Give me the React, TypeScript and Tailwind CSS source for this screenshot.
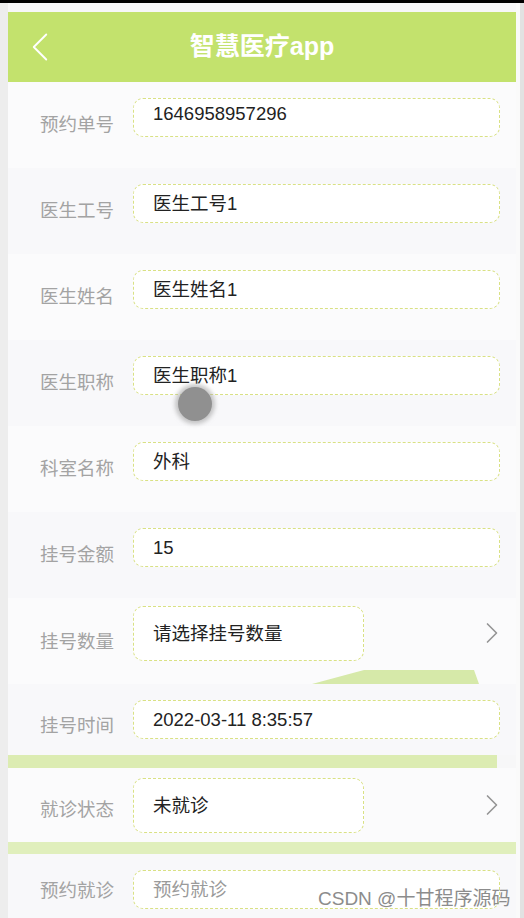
import { ChevronLeft, ChevronRight } from "lucide-react";

const font = { fontFamily: '"Liberation Sans", "Noto Sans CJK SC", sans-serif' };

type Field = {
  label: string;
  value: string;
  select?: boolean;
  top?: boolean;
  placeholder?: boolean;
  h: string;
  boxTop?: string;
  labelPad?: string;
};

const rows: Field[] = [
  { label: "预约单号", value: "1646958957296", top: true, h: "h-[86px]" },
  { label: "医生工号", value: "医生工号1", h: "h-[86px]" },
  { label: "医生姓名", value: "医生姓名1", h: "h-[86px]" },
  { label: "医生职称", value: "医生职称1", h: "h-[86px]" },
  { label: "科室名称", value: "外科", h: "h-[86px]" },
  { label: "挂号金额", value: "15", h: "h-[86px]" },
  { label: "挂号数量", value: "请选择挂号数量", select: true, h: "h-[86px]", boxTop: "pt-[8px]", labelPad: "pt-[2px]" },
  { label: "挂号时间", value: "2022-03-11 8:35:57", h: "h-[71px]", labelPad: "pt-[12px]" },
];

function Row({ f, alt }: { f: Field; alt?: boolean }) {
  return (
    <div className={`relative flex ${f.h} ${alt ? "bg-[#f8f8fa]" : "bg-[#fbfbfc]"}`}>
      <div className={`flex w-[125px] shrink-0 items-center pl-[32px] text-[18.5px] text-[#a3a3a3] ${f.labelPad ?? ""}`}>
        {f.label}
      </div>
      <div className={`${f.boxTop ?? "pt-[16px]"} ${f.select ? "flex flex-1 items-start" : "flex-1 pr-[16px]"}`}>
        <div
          className={`flex rounded-[10px] border border-dashed border-[#d9e184] bg-white pl-[19px] text-[18.5px] ${
            f.select ? "h-[55px] w-[231px] items-center" : f.top ? "h-[39px] items-start pt-[1px]" : "h-[39px] items-center"
          } ${f.placeholder ? "text-[#9a9a9a]" : "text-[#222]"}`}
        >
          {f.value}
        </div>
        {f.select && (
          <div className="ml-auto mr-[6px] mt-[9px] text-[#959595]">
            <ChevronRight size={36} strokeWidth={1.1} />
          </div>
        )}
      </div>
    </div>
  );
}

export default function App() {
  return (
    <div className="relative h-[918px] w-[524px] overflow-hidden bg-[#ececec]" style={font}>
      <div className="h-[3px] bg-black" />
      <div className="flex">
        <div className="w-[8px] shrink-0 bg-[#ededed]" />
        <div className="w-[508px] bg-[#f7f7f8] pt-[9px]">
          {/* Header */}
          <div className="relative flex h-[70px] items-center justify-center bg-[#c3e26d]">
            <div className="absolute left-[7px] top-[10px] text-white">
              <ChevronLeft size={50} strokeWidth={0.9} />
            </div>
            <h1 className="text-[25px] font-bold text-white">智慧医疗app</h1>
          </div>

          {rows.map((f, i) => (
            <Row key={f.label} f={f} alt={i % 2 === 1} />
          ))}

          <div className="h-[13px] w-[489px] bg-[#dcecb2]" />
          <Row
            f={{ label: "就诊状态", value: "未就诊", select: true, h: "h-[74px]", boxTop: "pt-[10px]", labelPad: "pt-[10px]" }}
          />
          <div className="h-[12px] bg-[#e0efbc]" />
          <Row
            f={{ label: "预约就诊", value: "预约就诊", placeholder: true, h: "h-[64px]", labelPad: "pt-[10px]" }}
            alt
          />
        </div>
        <div className="w-[4px] shrink-0 bg-[#fafafa]" />
        <div className="w-[4px] shrink-0 bg-[#e2e2e2]" />
      </div>

      {/* video artefact under the select row */}
      <svg className="absolute left-[312px] top-[670px]" width="168" height="14" viewBox="0 0 168 14">
        <polygon points="0,14 52,0 162,0 167,14" fill="#d6e9a9" />
      </svg>

      {/* touch cursor */}
      <div className="absolute left-[178px] top-[387px] h-[34px] w-[34px] rounded-full bg-[#909090] shadow-[0_0_4px_3px_rgba(160,160,160,0.6)]" />

      {/* watermark */}
      <div className="absolute left-[318px] top-[885px] text-[19px] text-[#8c8c8c]">CSDN @十甘程序源码</div>
    </div>
  );
}
